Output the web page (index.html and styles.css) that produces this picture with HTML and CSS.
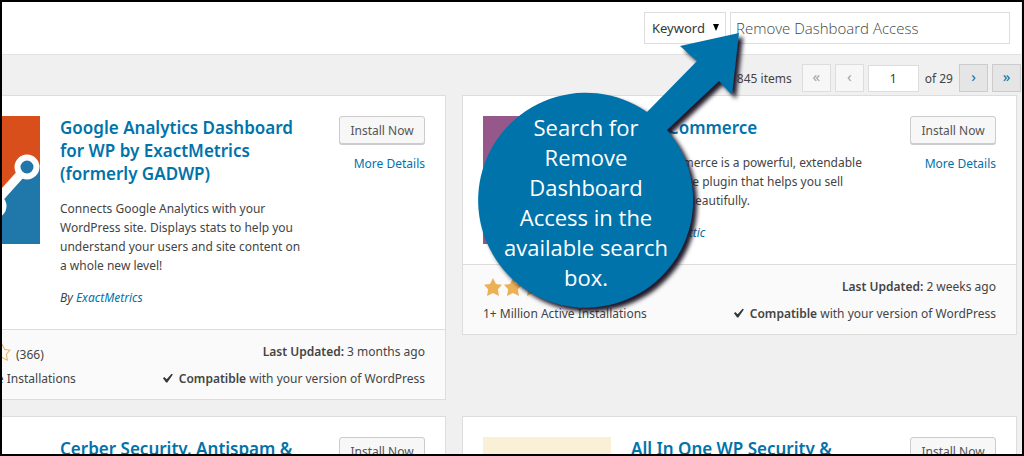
FILE: index.html
```html
<!DOCTYPE html>
<html lang="en">
<head>
<meta charset="utf-8">
<title>Add Plugins</title>
<link rel="stylesheet" href="styles.css">
</head>
<body>
<svg class="defs" aria-hidden="true">
  <symbol id="star" viewBox="0 0 20 20"><path d="M10 1l3 6 6 .75-4.120 4.620L16 19l-6-3-6 3 1.130-6.630L1 7.750 7 7z"/></symbol>
  <symbol id="star-empty" viewBox="0 0 20 20"><path fill-rule="evenodd" d="M10 1L7 7l-6 .75 4.130 4.620L4 19l6-3 6 3-1.120-6.630L19 7.750 13 7zm0 2.240l2.340 4.690 4.650.580-3.180 3.560.870 5.150L10 14.880l-4.680 2.340.870-5.150-3.180-3.560 4.650-.580z"/></symbol>
  <symbol id="check" viewBox="0 0 20 20"><path d="M14.830 4.890l1.340.940-5.810 8.380H9.020L5.780 9.670l1.340-1.250 2.570 2.400z"/></symbol>
</svg>
<div class="frame">
  <header class="filter-bar">
    <form class="search">
      <div class="select-wrap">
        <select class="search-type" aria-label="Search plugins by"><option>Keyword</option><option>Author</option><option>Tag</option></select>
        <svg class="caret" viewBox="0 0 6 7" aria-hidden="true"><path d="M0 0h6L3 7z"/></svg>
      </div>
      <input class="search-input" type="text" value="Remove Dashboard Access" aria-label="Search plugins">
    </form>
  </header>
  <nav class="pager" aria-label="Pages">
    <span class="count">845 items</span>
    <button class="page-btn" disabled aria-label="First page">«</button>
    <button class="page-btn" disabled aria-label="Previous page">‹</button>
    <input class="page-input" type="text" value="1" aria-label="Current page">
    <span class="total">of 29</span>
    <button class="page-btn" aria-label="Next page">›</button>
    <button class="page-btn" aria-label="Last page">»</button>
  </nav>
  <main class="plugins">
    <article class="card">
      <div class="card-top">
        <svg class="icon" viewBox="0 0 128 128" aria-hidden="true">
          <rect width="128" height="128" fill="#d94f1c"/>
          <path d="M0 110L40 66 80 90 115 51H128V128H0z" fill="#2077a9"/>
          <path d="M0 110L40 66 80 90 115 51" fill="none" stroke="#fff" stroke-width="9"/>
          <circle cx="82" cy="90" r="9.500" fill="#2077a9" stroke="#fff" stroke-width="6"/>
          <circle cx="115" cy="51" r="9.500" fill="#2077a9" stroke="#fff" stroke-width="6"/>
        </svg>
        <div class="info">
          <h3 class="name"><a href="#">Google Analytics Dashboard for WP by ExactMetrics (formerly GADWP)</a></h3>
          <p class="desc">Connects Google Analytics with your WordPress site. Displays stats to help you understand your users and site content on a whole new level!</p>
          <p class="author">By <a href="#">ExactMetrics</a></p>
        </div>
        <div class="actions"><button class="install">Install Now</button><a href="#">More Details</a></div>
      </div>
      <footer class="card-bottom">
        <div class="row">
          <span class="rating"><svg class="star"><use href="#star"/></svg><svg class="star"><use href="#star"/></svg><svg class="star"><use href="#star"/></svg><svg class="star"><use href="#star"/></svg><svg class="star"><use href="#star-empty"/></svg><span class="votes">(366)</span></span>
          <span><strong>Last Updated:</strong> 3 months ago</span>
        </div>
        <div class="row">
          <span>1+ Million Active Installations</span>
          <span class="compat"><svg class="check"><use href="#check"/></svg><span><strong>Compatible</strong> with your version of WordPress</span></span>
        </div>
      </footer>
    </article>
    <article class="card">
      <div class="card-top">
        <svg class="icon" viewBox="0 0 128 128" aria-hidden="true"><rect width="128" height="128" fill="#96588a"/></svg>
        <div class="info">
          <h3 class="name"><a href="#">WooCommerce</a></h3>
          <p class="desc">WooCommerce is a powerful, extendable eCommerce plugin that helps you sell anything. Beautifully.</p>
          <p class="author">By <a href="#">Automattic</a></p>
        </div>
        <div class="actions"><button class="install">Install Now</button><a href="#">More Details</a></div>
      </div>
      <footer class="card-bottom">
        <div class="row">
          <span class="rating"><svg class="star"><use href="#star"/></svg><svg class="star"><use href="#star"/></svg><svg class="star"><use href="#star"/></svg></span>
          <span><strong>Last Updated:</strong> 2 weeks ago</span>
        </div>
        <div class="row">
          <span>1+ Million Active Installations</span>
          <span class="compat"><svg class="check"><use href="#check"/></svg><span><strong>Compatible</strong> with your version of WordPress</span></span>
        </div>
      </footer>
    </article>
    <article class="card">
      <div class="card-top">
        <div class="icon"></div>
        <div class="info"><h3 class="name"><a href="#">Cerber Security, Antispam &amp;</a></h3></div>
        <div class="actions"><button class="install">Install Now</button></div>
      </div>
    </article>
    <article class="card">
      <div class="card-top">
        <svg class="icon" viewBox="0 0 128 128" aria-hidden="true"><rect width="128" height="128" fill="#faf0d7"/></svg>
        <div class="info"><h3 class="name"><a href="#">All In One WP Security &amp;</a></h3></div>
        <div class="actions"><button class="install">Install Now</button></div>
      </div>
    </article>
  </main>
  <aside class="callout">
    <svg class="callout-shape" viewBox="0 0 280 292" aria-hidden="true">
      <path d="M261 1L202 14 219 29 169 80A107.500 107.500 0 1 0 189 98L241 49 254 63z"/>
    </svg>
    <p class="callout-text">Search for Remove Dashboard Access in the available search box.</p>
  </aside>
</div>
</body>
</html>
```
FILE: styles.css
```css
* { box-sizing: border-box; }
body {
  margin: 0;
  font-family: "Noto Sans", "Open Sans", sans-serif;
  font-size: 12px;
  line-height: 19px;
  color: #444;
}
h3, p { margin: 0; }
a { color: #0073aa; text-decoration: none; }
strong { font-weight: 600; }
button, input, select { font: inherit; color: inherit; margin: 0; }
.defs { display: none; }
.frame {
  position: relative;
  height: 100vh;
  overflow: hidden;
  border: 2px solid #000;
  background: #f0f0f0;
}
.filter-bar {
  display: flex;
  justify-content: flex-end;
  margin-right: 1px;
  padding: 10px 11px 10px 0;
  background: #fff;
  border-bottom: 1px solid #e2e2e2;
}
.search { display: flex; gap: 4px; }
.select-wrap { position: relative; }
.search-type, .search-input {
  height: 32px;
  border: 1px solid #ddd;
  border-radius: 0;
  background: #fff;
}
.search-type { width: 82px; padding: 0 7px; appearance: none; font-size: 13px; color: #32373c; }
.caret { position: absolute; right: 7px; top: 12px; width: 6px; height: 7px; pointer-events: none; }
.search-input { width: 280px; padding: 0 5px; font-family: "Open Sans", sans-serif; font-size: 15px; font-weight: 300; }
.pager {
  display: flex;
  align-items: center;
  justify-content: flex-end;
  gap: 4px;
  height: 28px;
  margin: 9px 1px 3px 0;
}
.count { margin-right: 6px; }
.total { margin: 0 2px; }
.page-btn {
  width: 29px;
  height: 28px;
  padding: 0 0 4px;
  border: 1px solid #ccc;
  background: #e5e5e5;
  color: #0073aa;
  font-size: 15px;
  line-height: 20px;
}
.page-btn:disabled { border-color: #ddd; background: #f7f7f7; color: #a0a5aa; }
.page-input { width: 51px; height: 27px; border: 1px solid #ddd; text-align: center; color: #32373c; }
.plugins {
  display: grid;
  grid-template-columns: 1fr 1fr;
  gap: 16px;
  align-items: start;
  margin: 0 5px 0 -111px;
}
.card { border: 1px solid #ddd; background: #fff; }
.card-top {
  display: grid;
  grid-template-columns: 128px 1fr 86px;
  column-gap: 20px;
  padding: 20px;
}
.icon { display: block; width: 128px; height: 128px; }
.info { padding-right: 14px; }
.name { font-size: 17px; line-height: 23px; font-weight: 600; }
.desc { margin-top: 14px; }
.author { margin: 13px 0 2px; font-style: italic; }
.actions { text-align: right; }
.install {
  display: block;
  width: 100%;
  height: 28px;
  margin-bottom: 10px;
  padding: 0;
  border: 1px solid #ccc;
  border-radius: 3px;
  background: #f7f7f7;
  box-shadow: 0 1px 0 #ccc;
  color: #555;
}
.card-bottom { padding: 12px 20px 11px; border-top: 1px solid #ddd; background: #fafafa; }
.row { display: flex; justify-content: space-between; height: 19px; }
.row + .row { margin-top: 8px; }
.rating { display: flex; }
.star { width: 20px; height: 20px; fill: #ecb057; }
.votes { margin: 3px 0 0 4px; }
.compat { display: flex; gap: 2px; }
.check { width: 20px; height: 19px; fill: #32373c; }
.callout { position: absolute; left: 476px; top: 30px; width: 280px; }
.callout-shape {
  display: block;
  width: 280px;
  height: 292px;
  overflow: visible;
  fill: #0073aa;
  filter: drop-shadow(4px 4px 2px #201828);
}
.callout-text {
  position: absolute;
  left: 20px;
  top: 80px;
  width: 176px;
  color: #fff;
  font-family: "Open Sans", sans-serif;
  font-size: 22px;
  line-height: 30px;
  text-align: center;
}
```
